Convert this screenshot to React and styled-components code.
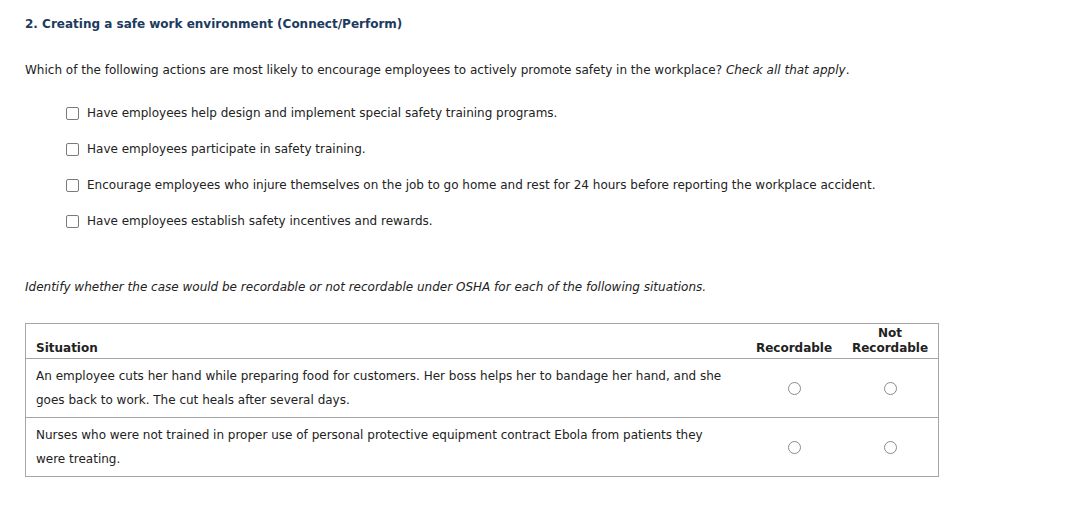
import React from "react";
import styled, { createGlobalStyle } from "styled-components";

const Global = createGlobalStyle`
  html, body { margin: 0; padding: 0; background: #fff; }
  body { font-family: "DejaVu Sans", Verdana, sans-serif; font-size: 12px; color: #222; }
`;

const Page = styled.div`
  padding: 16px 25px 20px 25px;
  width: 914px;
`;

const Title = styled.h2`
  margin: 0;
  font-size: 12px;
  font-weight: bold;
  color: #1c3b5e;
  line-height: 16px;
`;

const Question = styled.p`
  margin: 30px 0 0 0;
  line-height: 16px;
`;

const Options = styled.div`
  display: flex;
  flex-direction: column;
  gap: 20px;
  margin: 27px 0 0 41px;
`;

const Option = styled.label`
  display: flex;
  align-items: center;
  gap: 8px;
  line-height: 16px;
`;

const Box = styled.span`
  width: 11px;
  height: 11px;
  border: 1px solid #7a7a7a;
  border-radius: 2px;
  flex: none;
`;

const Instruction = styled.p`
  margin: 50px 0 0 0;
  font-style: italic;
  line-height: 16px;
`;

const Table = styled.div`
  margin-top: 28px;
  border: 1px solid #a6a6a6;
`;

const Row = styled.div`
  display: grid;
  grid-template-columns: 1fr 96px 96px;
  align-items: center;
  border-top: ${(p) => (p.$first ? "none" : "1px solid #a6a6a6")};
  padding: ${(p) => (p.$head ? "2px 0 2px 10px" : "5px 0 5px 10px")};
`;

const HeadCell = styled.div`
  font-weight: bold;
  line-height: 15px;
  text-align: ${(p) => (p.$center ? "center" : "left")};
  align-self: end;
`;

const Situation = styled.div`
  line-height: 24px;
  padding-right: 20px;
`;

const RadioCell = styled.div`
  display: flex;
  justify-content: center;
`;

const Radio = styled.span`
  width: 11px;
  height: 11px;
  border: 1px solid #8a8a8a;
  border-radius: 50%;
`;

const options = [
  "Have employees help design and implement special safety training programs.",
  "Have employees participate in safety training.",
  "Encourage employees who injure themselves on the job to go home and rest for 24 hours before reporting the workplace accident.",
  "Have employees establish safety incentives and rewards.",
];

const cases = [
  "An employee cuts her hand while preparing food for customers. Her boss helps her to bandage her hand, and she goes back to work. The cut heals after several days.",
  "Nurses who were not trained in proper use of personal protective equipment contract Ebola from patients they were treating.",
];

export default function App() {
  return (
    <>
      <Global />
      <Page>
        <Title>2. Creating a safe work environment (Connect/Perform)</Title>
        <Question>
          Which of the following actions are most likely to encourage employees to actively promote safety in the
          workplace? <i>Check all that apply</i>.
        </Question>
        <Options>
          {options.map((o) => (
            <Option key={o}>
              <Box />
              {o}
            </Option>
          ))}
        </Options>
        <Instruction>
          Identify whether the case would be recordable or not recordable under OSHA for each of the following
          situations.
        </Instruction>
        <Table>
          <Row $first $head>
            <HeadCell>Situation</HeadCell>
            <HeadCell $center>Recordable</HeadCell>
            <HeadCell $center>Not<br />Recordable</HeadCell>
          </Row>
          {cases.map((c) => (
            <Row key={c}>
              <Situation>{c}</Situation>
              <RadioCell><Radio /></RadioCell>
              <RadioCell><Radio /></RadioCell>
            </Row>
          ))}
        </Table>
      </Page>
    </>
  );
}
